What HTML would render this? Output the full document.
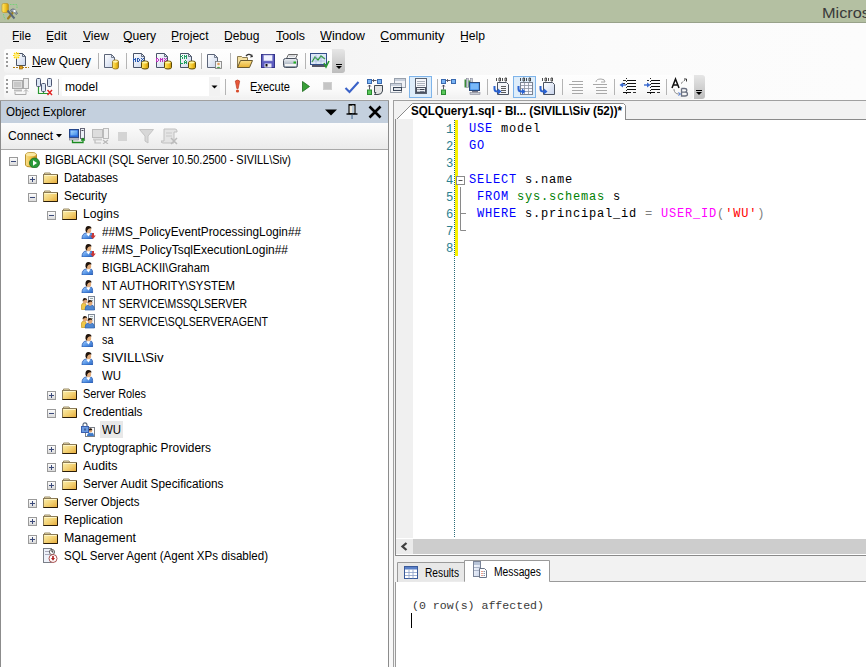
<!DOCTYPE html><html><head><meta charset="utf-8"><style>
*{margin:0;padding:0;box-sizing:border-box}
html,body{width:866px;height:667px;overflow:hidden;background:#f0f0f0;position:relative}
.r,.t,.i,.tb,.ovf,.gd,.sp,.sel{position:absolute}
.t{white-space:pre;line-height:1;transform-origin:0 0;font-family:"Liberation Sans",sans-serif}
.code{font-family:"Liberation Mono",monospace;font-size:12px;letter-spacing:0.8px;color:#000}
.tb{background:linear-gradient(#fefefe 0%,#fbfbfb 55%,#f1f1f1 100%);border-radius:3px}
.ovf{background:linear-gradient(#e6e6e6,#bdbdbd);border-radius:0 3px 3px 0}
.gd{width:2px;height:2px;background:#9a9a9a}
.sp{width:1px;background:#b4b4b4}
.sel{background:#deedfa;border:1px solid #7eb4ea}
</style></head><body><svg width="0" height="0" style="position:absolute"><defs><linearGradient id="gbox" x1="0" y1="0" x2="0" y2="1"><stop offset="0" stop-color="#fff"/><stop offset="1" stop-color="#d8d8d8"/></linearGradient><linearGradient id="gfold" x1="0" y1="0" x2="1" y2="1"><stop offset="0" stop-color="#fbf0b0"/><stop offset="0.55" stop-color="#f2cf70"/><stop offset="1" stop-color="#e4a838"/></linearGradient><linearGradient id="gdb" x1="0" y1="0" x2="1" y2="0"><stop offset="0" stop-color="#f8e090"/><stop offset="0.5" stop-color="#f0c040"/><stop offset="1" stop-color="#c89020"/></linearGradient><linearGradient id="gcyl" x1="0" y1="0" x2="1" y2="0"><stop offset="0" stop-color="#ffe870"/><stop offset="0.6" stop-color="#f0c020"/><stop offset="1" stop-color="#c09010"/></linearGradient><linearGradient id="gdoc" x1="0" y1="0" x2="1" y2="1"><stop offset="0" stop-color="#ffffff"/><stop offset="1" stop-color="#c8d4ec"/></linearGradient><linearGradient id="gprn" x1="0" y1="0" x2="0" y2="1"><stop offset="0" stop-color="#eef2f6"/><stop offset="1" stop-color="#8a98a8"/></linearGradient><linearGradient id="gusr" x1="0" y1="0" x2="1" y2="1"><stop offset="0" stop-color="#a8d0ff"/><stop offset="0.5" stop-color="#5a98e8"/><stop offset="1" stop-color="#2a64c0"/></linearGradient><linearGradient id="gopen" x1="0" y1="0" x2="0" y2="1"><stop offset="0" stop-color="#fbe08a"/><stop offset="1" stop-color="#e8b030"/></linearGradient><linearGradient id="gscr" x1="0" y1="0" x2="1" y2="1"><stop offset="0" stop-color="#a8d8ff"/><stop offset="1" stop-color="#3a88e8"/></linearGradient></defs></svg><div class="r" style="left:0;top:0;width:866px;height:22px;background:#b4c0a2"></div><div class="r" style="left:0;top:22px;width:866px;height:1px;background:#98a28a"></div><svg class="i" style="left:0px;top:0px;" width="22" height="22" viewBox="0 0 22 22"><rect x="2" y="3.5" width="6.5" height="9" rx="1.5" fill="url(#gcyl)" stroke="#b89020" stroke-width="0.6"/><rect x="10" y="4" width="1" height="1" fill="#7ad07a"/><rect x="11.5" y="4" width="1" height="1" fill="#7ad07a"/><rect x="13" y="4" width="1" height="1" fill="#7ad07a"/><rect x="14.5" y="4" width="1" height="1" fill="#7ad07a"/><rect x="16" y="4" width="1" height="1" fill="#7ad07a"/><rect x="16.5" y="5.5" width="1" height="1" fill="#7ad07a"/><rect x="16.5" y="7" width="1" height="1" fill="#7ad07a"/><rect x="3" y="14" width="1" height="1" fill="#7ad07a"/><rect x="3.3" y="15.5" width="1" height="1" fill="#7ad07a"/><rect x="3.8" y="17" width="1" height="1" fill="#7ad07a"/><rect x="4.5" y="18.5" width="1" height="1" fill="#7ad07a"/><path d="M8 18.5 L12.5 13" stroke="#a08020" stroke-width="2.2" stroke-linecap="round"/><path d="M7.5 10.5 L14.5 18.5" stroke="#5a6878" stroke-width="1.9"/><path d="M10.5 10 Q13 8 15 9.5 L17.5 13.5 L16 14.5 L13.5 11.5 L11.5 12 Z" fill="#9aa4b0" stroke="#4a5868" stroke-width="0.6"/><circle cx="14.5" cy="11" r="1.2" fill="#fff"/></svg><div class="t" style="left:822px;top:5.30px;font-size:15px;font-family:'Liberation Sans';font-weight:normal;color:#3a3a3a;transform:scaleX(1.0867);">Micros</div><div class="r" style="left:0;top:23px;width:866px;height:77px;background:linear-gradient(90deg,#eeeeee 0px,#f4f4f4 300px,#fbfbfb 600px,#fcfcfc 866px)"></div><div class="t" style="left:11.7px;top:29.84px;font-size:12px;font-family:'Liberation Sans';font-weight:normal;color:#000;transform:scaleX(0.9822);">File</div><div class="t" style="left:45.7px;top:29.84px;font-size:12px;font-family:'Liberation Sans';font-weight:normal;color:#000;transform:scaleX(1.0151);">Edit</div><div class="t" style="left:82.5px;top:29.84px;font-size:12px;font-family:'Liberation Sans';font-weight:normal;color:#000;transform:scaleX(1.0079);">View</div><div class="t" style="left:123px;top:29.84px;font-size:12px;font-family:'Liberation Sans';font-weight:normal;color:#000;transform:scaleX(1.0096);">Query</div><div class="t" style="left:171px;top:29.84px;font-size:12px;font-family:'Liberation Sans';font-weight:normal;color:#000;transform:scaleX(1.0038);">Project</div><div class="t" style="left:224px;top:29.84px;font-size:12px;font-family:'Liberation Sans';font-weight:normal;color:#000;transform:scaleX(1.0035);">Debug</div><div class="t" style="left:276px;top:29.84px;font-size:12px;font-family:'Liberation Sans';font-weight:normal;color:#000;transform:scaleX(1.0351);">Tools</div><div class="t" style="left:320px;top:29.84px;font-size:12px;font-family:'Liberation Sans';font-weight:normal;color:#000;transform:scaleX(1.0542);">Window</div><div class="t" style="left:380px;top:29.84px;font-size:12px;font-family:'Liberation Sans';font-weight:normal;color:#000;transform:scaleX(1.0628);">Community</div><div class="t" style="left:460px;top:29.84px;font-size:12px;font-family:'Liberation Sans';font-weight:normal;color:#000;transform:scaleX(1.0127);">Help</div><div class="r" style="left:13px;top:41px;width:6px;height:1px;background:#000"></div><div class="r" style="left:47px;top:41px;width:6px;height:1px;background:#000"></div><div class="r" style="left:83px;top:41px;width:7px;height:1px;background:#000"></div><div class="r" style="left:124px;top:41px;width:9px;height:1px;background:#000"></div><div class="r" style="left:172px;top:41px;width:7px;height:1px;background:#000"></div><div class="r" style="left:225px;top:41px;width:7px;height:1px;background:#000"></div><div class="r" style="left:276px;top:41px;width:7px;height:1px;background:#000"></div><div class="r" style="left:321px;top:41px;width:10px;height:1px;background:#000"></div><div class="r" style="left:381px;top:41px;width:8px;height:1px;background:#000"></div><div class="r" style="left:461px;top:41px;width:7px;height:1px;background:#000"></div><div class="tb" style="left:4px;top:49px;width:328px;height:24px"></div><div class="ovf" style="left:332px;top:49px;width:13px;height:24px"></div><div class="tb" style="left:4px;top:75px;width:689px;height:24px"></div><div class="ovf" style="left:694px;top:75px;width:11px;height:24px"></div><div class="gd" style="left:6px;top:53px"></div><div class="gd" style="left:6px;top:57px"></div><div class="gd" style="left:6px;top:61px"></div><div class="gd" style="left:6px;top:65px"></div><div class="gd" style="left:6px;top:79px"></div><div class="gd" style="left:6px;top:83px"></div><div class="gd" style="left:6px;top:87px"></div><div class="gd" style="left:6px;top:91px"></div><div class="sp" style="left:98px;top:53px;height:16px"></div><div class="sp" style="left:126px;top:53px;height:16px"></div><div class="sp" style="left:201px;top:53px;height:16px"></div><div class="sp" style="left:230px;top:53px;height:16px"></div><div class="sp" style="left:305px;top:53px;height:16px"></div><div class="sp" style="left:58px;top:79px;height:16px"></div><div class="sp" style="left:225px;top:79px;height:16px"></div><div class="sp" style="left:437px;top:79px;height:16px"></div><div class="sp" style="left:487px;top:79px;height:16px"></div><div class="sp" style="left:562px;top:79px;height:16px"></div><div class="sp" style="left:614px;top:79px;height:16px"></div><div class="sp" style="left:666px;top:79px;height:16px"></div><svg class="i" style="left:335px;top:64px;" width="8" height="6" viewBox="0 0 8 6"><rect x="1" y="0" width="6" height="1" fill="#000"/><path d="M1 2 L7 2 L4 5 Z" fill="#000"/></svg><svg class="i" style="left:695px;top:90px;" width="8" height="6" viewBox="0 0 8 6"><rect x="1" y="0" width="6" height="1" fill="#000"/><path d="M1 2 L7 2 L4 5 Z" fill="#000"/></svg><div class="t" style="left:32px;top:55.42px;font-size:12.5px;font-family:'Liberation Sans';font-weight:normal;color:#000;transform:scaleX(0.9435);">New Query</div><div class="r" style="left:32px;top:66px;width:9px;height:1px;background:#000"></div><svg class="i" style="left:12px;top:52px;" width="18" height="18" viewBox="0 0 18 18"><path d="M4.5 1.5 L10.5 1.5 L13.5 4.5 L13.5 13.5 L4.5 13.5 Z" fill="url(#gdoc)" stroke="#4a5468"/><path d="M10.5 1.5 L10.5 4.5 L13.5 4.5" fill="none" stroke="#4a5468" stroke-width="0.8"/><path d="M4.5 0 L4.5 7 M1 3.5 L8 3.5 M2 1 L7 6 M7 1 L2 6" stroke="#ffd000" stroke-width="1.2"/><circle cx="4.5" cy="3.5" r="2" fill="#fff080"/><path d="M1 15.5 L17 15.5" stroke="#b07a10" stroke-width="1.2" stroke-dasharray="2 1"/><rect x="7.5" y="14" width="3" height="3" fill="#e0a020" stroke="#906000" stroke-width="0.6"/><path d="M9 13.5 L9 14" stroke="#906000"/></svg><svg class="i" style="left:103px;top:53px;" width="18" height="17" viewBox="0 0 18 17"><path d="M1.5 1.5 L8.5 1.5 L11.5 4.5 L11.5 14.5 L1.5 14.5 Z" fill="url(#gdoc)" stroke="#5b6478" stroke-width="1"/><path d="M8.5 1.5 L8.5 4.5 L11.5 4.5" fill="none" stroke="#5b6478" stroke-width="0.8"/><path d="M9.5 8.5 Q9.5 7 12.5 7 Q15.5 7 15.5 8.5 L15.5 14.5 Q15.5 16 12.5 16 Q9.5 16 9.5 14.5 Z" fill="url(#gcyl)" stroke="#8a6a10" stroke-width="0.8"/><ellipse cx="12.5" cy="8.6" rx="2.5" ry="1.1" fill="#fff3b0"/></svg><svg class="i" style="left:132px;top:52px;" width="18" height="18" viewBox="0 0 18 18"><path d="M1.5 1.5 L9.5 1.5 L12.5 4.5 L12.5 15.5 L1.5 15.5 Z" fill="url(#gdoc)" stroke="#4a5468"/><path d="M9.5 1.5 L9.5 4.5 L12.5 4.5" fill="none" stroke="#4a5468" stroke-width="0.8"/><rect x="1" y="6" width="1" height="1" fill="#2a5ab0"/><rect x="3" y="6" width="1" height="1" fill="#2a5ab0"/><rect x="1" y="7" width="1" height="1" fill="#2a5ab0"/><rect x="2" y="7" width="1" height="1" fill="#2a5ab0"/><rect x="3" y="7" width="1" height="1" fill="#2a5ab0"/><rect x="1" y="8" width="1" height="1" fill="#2a5ab0"/><rect x="3" y="8" width="1" height="1" fill="#2a5ab0"/><rect x="1" y="9" width="1" height="1" fill="#2a5ab0"/><rect x="3" y="9" width="1" height="1" fill="#2a5ab0"/><rect x="5" y="6" width="1" height="1" fill="#2a5ab0"/><rect x="6" y="6" width="1" height="1" fill="#2a5ab0"/><rect x="5" y="7" width="1" height="1" fill="#2a5ab0"/><rect x="7" y="7" width="1" height="1" fill="#2a5ab0"/><rect x="5" y="8" width="1" height="1" fill="#2a5ab0"/><rect x="7" y="8" width="1" height="1" fill="#2a5ab0"/><rect x="5" y="9" width="1" height="1" fill="#2a5ab0"/><rect x="6" y="9" width="1" height="1" fill="#2a5ab0"/><rect x="9" y="6" width="1" height="1" fill="#2a5ab0"/><rect x="11" y="6" width="1" height="1" fill="#2a5ab0"/><rect x="10" y="7" width="1" height="1" fill="#2a5ab0"/><rect x="9" y="8" width="1" height="1" fill="#2a5ab0"/><rect x="11" y="8" width="1" height="1" fill="#2a5ab0"/><rect x="9" y="9" width="1" height="1" fill="#2a5ab0"/><rect x="11" y="9" width="1" height="1" fill="#2a5ab0"/><path d="M9.5 10.5 Q9.5 9 13 9 Q16.5 9 16.5 10.5 L16.5 15.5 Q16.5 17 13 17 Q9.5 17 9.5 15.5 Z" fill="url(#gcyl)" stroke="#5a4a08" stroke-width="1"/><ellipse cx="13" cy="10.5" rx="2.6" ry="1" fill="#fff8a0"/></svg><svg class="i" style="left:155px;top:52px;" width="18" height="18" viewBox="0 0 18 18"><path d="M1.5 1.5 L9.5 1.5 L12.5 4.5 L12.5 15.5 L1.5 15.5 Z" fill="url(#gdoc)" stroke="#4a5468"/><path d="M9.5 1.5 L9.5 4.5 L12.5 4.5" fill="none" stroke="#4a5468" stroke-width="0.8"/><rect x="1" y="6" width="1" height="1" fill="#c030c0"/><rect x="2" y="6" width="1" height="1" fill="#c030c0"/><rect x="1" y="7" width="1" height="1" fill="#c030c0"/><rect x="3" y="7" width="1" height="1" fill="#c030c0"/><rect x="1" y="8" width="1" height="1" fill="#c030c0"/><rect x="3" y="8" width="1" height="1" fill="#c030c0"/><rect x="1" y="9" width="1" height="1" fill="#c030c0"/><rect x="2" y="9" width="1" height="1" fill="#c030c0"/><rect x="5" y="6" width="1" height="1" fill="#c030c0"/><rect x="7" y="6" width="1" height="1" fill="#c030c0"/><rect x="5" y="7" width="1" height="1" fill="#c030c0"/><rect x="6" y="7" width="1" height="1" fill="#c030c0"/><rect x="7" y="7" width="1" height="1" fill="#c030c0"/><rect x="5" y="8" width="1" height="1" fill="#c030c0"/><rect x="7" y="8" width="1" height="1" fill="#c030c0"/><rect x="5" y="9" width="1" height="1" fill="#c030c0"/><rect x="7" y="9" width="1" height="1" fill="#c030c0"/><rect x="9" y="6" width="1" height="1" fill="#c030c0"/><rect x="11" y="6" width="1" height="1" fill="#c030c0"/><rect x="10" y="7" width="1" height="1" fill="#c030c0"/><rect x="9" y="8" width="1" height="1" fill="#c030c0"/><rect x="11" y="8" width="1" height="1" fill="#c030c0"/><rect x="9" y="9" width="1" height="1" fill="#c030c0"/><rect x="11" y="9" width="1" height="1" fill="#c030c0"/><path d="M9.5 10.5 Q9.5 9 13 9 Q16.5 9 16.5 10.5 L16.5 15.5 Q16.5 17 13 17 Q9.5 17 9.5 15.5 Z" fill="url(#gcyl)" stroke="#5a4a08" stroke-width="1"/><ellipse cx="13" cy="10.5" rx="2.6" ry="1" fill="#fff8a0"/></svg><svg class="i" style="left:179px;top:52px;" width="18" height="18" viewBox="0 0 18 18"><path d="M1.5 1.5 L9.5 1.5 L12.5 4.5 L12.5 15.5 L1.5 15.5 Z" fill="url(#gdoc)" stroke="#4a5468"/><path d="M9.5 1.5 L9.5 4.5 L12.5 4.5" fill="none" stroke="#4a5468" stroke-width="0.8"/><rect x="1" y="3" width="1" height="1" fill="#20a060"/><rect x="3" y="3" width="1" height="1" fill="#20a060"/><rect x="2" y="4" width="1" height="1" fill="#20a060"/><rect x="1" y="5" width="1" height="1" fill="#20a060"/><rect x="3" y="5" width="1" height="1" fill="#20a060"/><rect x="1" y="6" width="1" height="1" fill="#20a060"/><rect x="3" y="6" width="1" height="1" fill="#20a060"/><rect x="5" y="3" width="1" height="1" fill="#20a060"/><rect x="7" y="3" width="1" height="1" fill="#20a060"/><rect x="5" y="4" width="1" height="1" fill="#20a060"/><rect x="6" y="4" width="1" height="1" fill="#20a060"/><rect x="7" y="4" width="1" height="1" fill="#20a060"/><rect x="5" y="5" width="1" height="1" fill="#20a060"/><rect x="7" y="5" width="1" height="1" fill="#20a060"/><rect x="5" y="6" width="1" height="1" fill="#20a060"/><rect x="7" y="6" width="1" height="1" fill="#20a060"/><rect x="1" y="8" width="1" height="1" fill="#20a060"/><rect x="1" y="9" width="1" height="1" fill="#20a060"/><rect x="1" y="10" width="1" height="1" fill="#20a060"/><rect x="1" y="11" width="1" height="1" fill="#20a060"/><rect x="2" y="11" width="1" height="1" fill="#20a060"/><rect x="3" y="11" width="1" height="1" fill="#20a060"/><rect x="6" y="8" width="1" height="1" fill="#20a060"/><rect x="5" y="9" width="1" height="1" fill="#20a060"/><rect x="7" y="9" width="1" height="1" fill="#20a060"/><rect x="5" y="10" width="1" height="1" fill="#20a060"/><rect x="6" y="10" width="1" height="1" fill="#20a060"/><rect x="7" y="10" width="1" height="1" fill="#20a060"/><rect x="5" y="11" width="1" height="1" fill="#20a060"/><rect x="7" y="11" width="1" height="1" fill="#20a060"/><path d="M9.5 10.5 Q9.5 9 13 9 Q16.5 9 16.5 10.5 L16.5 15.5 Q16.5 17 13 17 Q9.5 17 9.5 15.5 Z" fill="url(#gcyl)" stroke="#5a4a08" stroke-width="1"/><ellipse cx="13" cy="10.5" rx="2.6" ry="1" fill="#fff8a0"/></svg><svg class="i" style="left:206px;top:53px;" width="18" height="17" viewBox="0 0 18 17"><path d="M1.5 1.5 L8.5 1.5 L11.5 4.5 L11.5 14.5 L1.5 14.5 Z" fill="url(#gdoc)" stroke="#5b6478" stroke-width="1"/><path d="M8.5 1.5 L8.5 4.5 L11.5 4.5" fill="none" stroke="#5b6478" stroke-width="0.8"/><rect x="9.5" y="8.5" width="6" height="7" fill="#f4f4f4" stroke="#777" stroke-width="0.8"/><circle cx="12.5" cy="11" r="1.3" fill="#e0a060"/><path d="M10.5 15 Q12.5 12.5 14.5 15" fill="#50a050"/></svg><svg class="i" style="left:236px;top:53px;" width="18" height="16" viewBox="0 0 18 16"><path d="M1.5 14.5 L1.5 3.5 L5.5 3.5 L6.5 4.5 L11.5 4.5 L11.5 7" fill="#f4e0a0" stroke="#8a7a50" stroke-width="1"/><path d="M1.5 14.5 L4.5 7.5 L16.5 7.5 L13.5 14.5 Z" fill="url(#gopen)" stroke="#6a5a30" stroke-width="1"/><path d="M10 3 Q12.5 0 15.5 2.5" fill="none" stroke="#333" stroke-width="1.3"/><path d="M14 4.5 L17 4 L16 1 Z" fill="#333"/></svg><svg class="i" style="left:260px;top:53px;" width="16" height="16" viewBox="0 0 16 16"><rect x="1.5" y="1.5" width="13" height="13" fill="#5c5cc0" stroke="#34348a"/><rect x="3.5" y="2" width="9" height="6" fill="#f0f2ff" stroke="#8888c8" stroke-width="0.6"/><rect x="4.5" y="10.5" width="7" height="4" fill="#e8e8f4"/><rect x="5.5" y="11" width="2" height="2.5" fill="#111"/></svg><svg class="i" style="left:282px;top:53px;" width="17" height="16" viewBox="0 0 17 16"><path d="M4.5 5.5 L6.5 1.5 L15.5 1.5 L13.5 5.5 Z" fill="#f4f6f8" stroke="#555" stroke-width="0.9"/><path d="M7 3 L13 3" stroke="#999" stroke-width="0.6"/><rect x="1.5" y="5.5" width="14" height="9" rx="2" fill="url(#gprn)" stroke="#4a5260"/><rect x="3" y="11" width="11" height="2" fill="#f4f4f4"/><rect x="11.5" y="8.5" width="2.5" height="2" fill="#20b020"/></svg><svg class="i" style="left:310px;top:52px;" width="20" height="18" viewBox="0 0 20 18"><rect x="0.5" y="1.5" width="16" height="11" fill="#dde8f8" stroke="#34508a"/><path d="M2 10 L5 5 L8 8 L11 4 L15 7" fill="none" stroke="#2a9a30" stroke-width="1.3"/><path d="M2 6 L15 6 M2 9 L15 9 M6 3 L6 12 M11 3 L11 12" stroke="#90a8d0" stroke-width="0.5"/><rect x="2" y="13" width="14" height="2" fill="#556"/><path d="M14 11 L16 15 L19 9" fill="none" stroke="#2a9a30" stroke-width="1.6"/></svg><svg class="i" style="left:12px;top:78px;" width="18" height="18" viewBox="0 0 18 18"><rect x="0.5" y="2.5" width="10" height="8" fill="#ddd" stroke="#aaa"/><rect x="2" y="4" width="7" height="5" fill="#c8c8c8"/><rect x="2" y="11.5" width="8" height="2" fill="#bbb"/><rect x="11.5" y="0.5" width="5" height="10" fill="#eee" stroke="#aaa"/><path d="M3 14 L3 16.5 L14 16.5 L14 12 M12 13.5 L14 11.5 L16 13.5" fill="none" stroke="#aaa" stroke-width="1"/></svg><svg class="i" style="left:35px;top:77px;" width="19" height="19" viewBox="0 0 19 19"><rect x="1.5" y="1.5" width="4" height="8" rx="1" fill="#dce6f4" stroke="#4a5470"/><rect x="6.5" y="6.5" width="4" height="8" rx="1" fill="#dce6f4" stroke="#4a5470"/><rect x="12.5" y="1.5" width="4" height="8" rx="1" fill="#dce6f4" stroke="#4a5470"/><path d="M3.5 10 L3.5 16.5 L13 16.5 M8.5 15 L8.5 16.5" fill="none" stroke="#2a9a30" stroke-width="1.2"/><path d="M12.5 13 L17 18 M17 13 L12.5 18" stroke="#e02020" stroke-width="1.4"/></svg><svg class="i" style="left:233px;top:79px;" width="9" height="15" viewBox="0 0 9 15"><path d="M2.3 2 Q4.5 0 6.7 2 L5.2 9.5 L3.8 9.5 Z" fill="#e8583a" stroke="#b03018" stroke-width="0.6"/><circle cx="4.5" cy="12" r="1.6" fill="#d84a2a"/></svg><svg class="i" style="left:301px;top:80px;" width="10" height="13" viewBox="0 0 10 13"><path d="M1.5 1.5 L8.5 6.5 L1.5 11.5 Z" fill="#38a038" stroke="#1a6a1a" stroke-width="0.8"/></svg><svg class="i" style="left:323px;top:82px;" width="10" height="10" viewBox="0 0 10 10"><rect x="0" y="0" width="9" height="8" fill="#cfcfcf"/><rect x="1" y="1" width="7" height="6" fill="#c4c4c4"/></svg><svg class="i" style="left:344px;top:80px;" width="16" height="14" viewBox="0 0 16 14"><path d="M1.5 8 L5.5 12 L14.5 2" fill="none" stroke="#3a62c8" stroke-width="2.1"/></svg><svg class="i" style="left:366px;top:78px;" width="18" height="18" viewBox="0 0 18 18"><rect x="1.5" y="1.5" width="4" height="4" fill="#7ab4f4" stroke="#3a6ab0"/><rect x="11.5" y="1.5" width="4" height="4" fill="#7ab4f4" stroke="#3a6ab0"/><path d="M6.5 2.5 L10.5 2.5 M6.5 2.5 L8 1.2 M6.5 2.5 L8 3.8" stroke="#445" stroke-width="0.9" fill="none"/><rect x="1.5" y="12" width="4" height="4.5" fill="#5ac85a" stroke="#2a8a30"/><path d="M3.5 11.5 L3.5 7 M3.5 7 L2.2 8.5 M3.5 7 L4.8 8.5" stroke="#445" stroke-width="0.9" fill="none"/><path d="M8.5 7.5 L16.5 7.5 L16.5 13 Q16 16.5 12 16.5 L8.5 16.5 L10 14.5 L8.5 14.5 Z" fill="#e4e4e4" stroke="#404850" stroke-width="1"/></svg><svg class="i" style="left:390px;top:78px;" width="16" height="16" viewBox="0 0 16 16"><rect x="4.5" y="0.5" width="11" height="9" fill="#f0f2f6" stroke="#98a0ac"/><rect x="5" y="1" width="10" height="2" fill="#c8d0dc"/><rect x="0.5" y="5.5" width="11" height="9" fill="#f4f6f8" stroke="#98a0ac"/><rect x="1" y="6" width="10" height="2" fill="#c8d0dc"/><rect x="3.5" y="9.5" width="8" height="3" fill="#dfe4ea" stroke="#3a4658"/></svg><div class="sel" style="left:409px;top:76px;width:23px;height:22px"></div><svg class="i" style="left:413px;top:78px;" width="16" height="17" viewBox="0 0 16 17"><rect x="2.5" y="0.5" width="11" height="15" fill="#f6f7fa" stroke="#5a6270"/><path d="M4 3.5 L12 3.5 M4 5.5 L12 5.5 M4 7.5 L12 7.5" stroke="#9aa2ae" stroke-width="0.8"/><rect x="3.5" y="9.5" width="9" height="5" fill="#eef1f5" stroke="#4a5260"/><rect x="4.5" y="11" width="1" height="1" fill="#3a4250"/><rect x="6.5" y="11" width="5" height="1" fill="#3a4250"/><rect x="4.5" y="13" width="1" height="1" fill="#7a8290"/><rect x="6.5" y="13" width="5" height="1" fill="#7a8290"/></svg><svg class="i" style="left:440px;top:78px;" width="18" height="18" viewBox="0 0 18 18"><rect x="1.5" y="1.5" width="4" height="4" fill="#7ab4f4" stroke="#3a6ab0"/><rect x="11.5" y="1.5" width="4" height="4" fill="#7ab4f4" stroke="#3a6ab0"/><path d="M6.5 2.5 L10.5 2.5 M6.5 2.5 L8 1.2 M6.5 2.5 L8 3.8" stroke="#445" stroke-width="0.9" fill="none"/><rect x="1.5" y="12" width="4" height="4.5" fill="#5ac85a" stroke="#2a8a30"/><path d="M3.5 11.5 L3.5 7 M3.5 7 L2.2 8.5 M3.5 7 L4.8 8.5" stroke="#445" stroke-width="0.9" fill="none"/></svg><svg class="i" style="left:464px;top:78px;" width="17" height="18" viewBox="0 0 17 18"><rect x="0.5" y="1.5" width="2" height="8" fill="#3a8a3a"/><rect x="2.5" y="0.5" width="2" height="9" fill="#c8d0d8" stroke="#778" stroke-width="0.5"/><rect x="4.5" y="2.5" width="2" height="7" fill="#4a9a4a"/><rect x="6.5" y="0.5" width="2" height="8" fill="#c8d0d8" stroke="#778" stroke-width="0.5"/><rect x="5.5" y="4.5" width="10" height="8" fill="#3a88e8" stroke="#2a4a7a"/><rect x="6.5" y="5.5" width="8" height="6" fill="#78b8f8"/><rect x="8" y="13" width="6" height="1.5" fill="#778"/><rect x="6" y="14.5" width="10" height="2" fill="#c8ccd4" stroke="#778" stroke-width="0.5"/></svg><svg class="i" style="left:492px;top:77px;" width="18" height="19" viewBox="0 0 18 19"><path d="M4.5 1 L4.5 4 M7 1 L8.5 1 L8.5 4 L7 4 Z M10.5 1 L10.5 4 M13 1 L14.5 1 L14.5 4 L13 4 Z" stroke="#222" stroke-width="0.8" fill="none"/><path d="M5.5 5.5 L14.5 5.5 L16.5 7.5 L16.5 17.5 L5.5 17.5 Z" fill="#f4f6fa" stroke="#4a5260"/><path d="M9 9.5 L14 9.5 M9 11.5 L14 11.5 M9 13.5 L14 13.5 M9 15.5 L14 15.5" stroke="#333" stroke-width="0.8"/><path d="M2.5 9 L2.5 12 Q2.5 14.5 5.5 14.5 L6.5 14.5" fill="none" stroke="#2a62d0" stroke-width="2"/><path d="M6 11.5 L9.5 14.5 L6 17.5 Z" fill="#2a62d0"/></svg><div class="sel" style="left:513px;top:76px;width:23px;height:22px"></div><svg class="i" style="left:516px;top:77px;" width="18" height="19" viewBox="0 0 18 19"><path d="M4.5 1 L4.5 4 M7 1 L8.5 1 L8.5 4 L7 4 Z M10.5 1 L10.5 4 M13 1 L14.5 1 L14.5 4 L13 4 Z" stroke="#222" stroke-width="0.8" fill="none"/><rect x="4.5" y="5.5" width="12" height="12" fill="#f8f8ff" stroke="#7a8290"/><path d="M5 8.5 L16 8.5 M5 11.5 L16 11.5 M5 14.5 L16 14.5 M8.5 6 L8.5 17 M12.5 6 L12.5 17" stroke="#8a92a0" stroke-width="0.8"/><path d="M2.5 9 L2.5 12 Q2.5 14.5 5.5 14.5 L6.5 14.5" fill="none" stroke="#2a62d0" stroke-width="2"/><path d="M6 11.5 L9.5 14.5 L6 17.5 Z" fill="#2a62d0"/></svg><svg class="i" style="left:538px;top:77px;" width="18" height="19" viewBox="0 0 18 19"><path d="M4.5 1 L4.5 4 M7 1 L8.5 1 L8.5 4 L7 4 Z M10.5 1 L10.5 4 M13 1 L14.5 1 L14.5 4 L13 4 Z" stroke="#222" stroke-width="0.8" fill="none"/><path d="M5.5 5.5 L14.5 5.5 L16.5 7.5 L16.5 17.5 L5.5 17.5 Z" fill="url(#gdoc)" stroke="#4a5260"/><path d="M2.5 9 L2.5 12 Q2.5 14.5 5.5 14.5 L6.5 14.5" fill="none" stroke="#2a62d0" stroke-width="2"/><path d="M6 11.5 L9.5 14.5 L6 17.5 Z" fill="#2a62d0"/></svg><svg class="i" style="left:568px;top:79px;" width="16" height="16" viewBox="0 0 16 16"><path d="M4 2.5 L15 2.5 M1 5.5 L15 5.5 M4 8.5 L15 8.5 M4 11.5 L15 11.5 M4 14.5 L15 14.5" stroke="#a8a8a8" stroke-width="1"/></svg><svg class="i" style="left:592px;top:78px;" width="16" height="17" viewBox="0 0 16 17"><path d="M4 4 Q4 1 9 1 Q13 1 13 4 L9 4" fill="none" stroke="#a8a8a8"/><path d="M1 6.5 L15 6.5 M4 9.5 L15 9.5 M4 12.5 L15 12.5 M4 15.5 L15 15.5" stroke="#a8a8a8" stroke-width="1"/></svg><svg class="i" style="left:619px;top:78px;" width="19" height="18" viewBox="0 0 19 18"><path d="M8 2.5 L17 2.5 M8 5.5 L17 5.5 M8 8.5 L17 8.5 M8 11.5 L17 11.5 M4 14.5 L12 14.5" stroke="#111" stroke-width="1"/><path d="M4 2.5 L7 2.5 M4 5.5 L6 5.5 M14 14.5 L17 14.5" stroke="#333" stroke-width="1"/><path d="M7.5 0 L7.5 17" stroke="#222" stroke-width="1" stroke-dasharray="1 2"/><path d="M0.5 7 L4 4.5 L4 9.5 Z" fill="#3a6ad0"/><path d="M3 7 L7 7" stroke="#3a6ad0" stroke-width="1.4"/></svg><svg class="i" style="left:643px;top:78px;" width="19" height="18" viewBox="0 0 19 18"><path d="M8 2.5 L17 2.5 M8 5.5 L17 5.5 M8 8.5 L17 8.5 M8 11.5 L17 11.5 M4 14.5 L12 14.5" stroke="#111" stroke-width="1"/><path d="M4 2.5 L6 2.5 M14 14.5 L17 14.5" stroke="#333" stroke-width="1"/><path d="M7.5 0 L7.5 17" stroke="#222" stroke-width="1" stroke-dasharray="1 2"/><path d="M7.5 7 L4 4.5 L4 9.5 Z" fill="#3a6ad0"/><path d="M1 7 L5 7" stroke="#3a6ad0" stroke-width="1.4"/></svg><svg class="i" style="left:671px;top:77px;" width="19" height="20" viewBox="0 0 19 20"><path d="M1 11 L4.5 2 L8 11 M2.3 8 L6.7 8" fill="none" stroke="#111" stroke-width="1.5"/><path d="M10.5 11.5 L10.5 19 L14 19 Q16.5 19 16.5 17 Q16.5 15.2 14 15.2 L10.5 15.2 M10.5 11.5 L13.5 11.5 Q15.8 11.5 15.8 13.3 Q15.8 15.2 13.5 15.2" fill="none" stroke="#6a7080" stroke-width="1.3"/><path d="M10 6.5 L14.5 2.5" stroke="#333" stroke-width="1" stroke-dasharray="1 1"/><path d="M13 2 L15.5 2 L15.5 4.5" fill="none" stroke="#333" stroke-width="1"/><path d="M3 12.5 Q3.5 17 8 17" fill="none" stroke="#333" stroke-width="1" stroke-dasharray="1 1"/><path d="M7.5 15.5 L9.5 17 L7.5 18.5" fill="none" stroke="#3a6ad0" stroke-width="1"/></svg><div class="r" style="left:62px;top:77px;width:147px;height:19px;background:#fff"></div><div class="r" style="left:209px;top:77px;width:11px;height:19px;background:#f2f2f2"></div><div class="t" style="left:65px;top:81.42px;font-size:12.5px;font-family:'Liberation Sans';font-weight:normal;color:#000;transform:scaleX(0.9693);">model</div><svg class="i" style="left:211px;top:85px;" width="8" height="5" viewBox="0 0 8 5"><path d="M0.5 0.5 L6.5 0.5 L3.5 3.5 Z" fill="#000"/></svg><div class="t" style="left:250px;top:81.42px;font-size:12.5px;font-family:'Liberation Sans';font-weight:normal;color:#000;transform:scaleX(0.8855);">Execute</div><div class="r" style="left:256px;top:92px;width:5px;height:1px;background:#000"></div><div class="r" style="left:0;top:100px;width:389px;height:567px;background:#fff"></div><div class="r" style="left:0;top:100px;width:1px;height:567px;background:#8c8c8c"></div><div class="r" style="left:388px;top:100px;width:1px;height:567px;background:#8c8c8c"></div><div class="r" style="left:389px;top:100px;width:4px;height:567px;background:#f8f8f8"></div><div class="r" style="left:1px;top:100px;width:387px;height:23px;background:#c4d0de"></div><div class="t" style="left:6px;top:106.42px;font-size:12.5px;font-family:'Liberation Sans';font-weight:normal;color:#000;transform:scaleX(0.9285);">Object Explorer</div><div class="r" style="left:0;top:100px;width:389px;height:1px;background:#a0a0a0"></div><svg class="i" style="left:325px;top:109px;" width="12" height="7" viewBox="0 0 12 7"><path d="M0 0.5 L12 0.5 L6 6.5 Z" fill="#000"/></svg><svg class="i" style="left:346px;top:103px;" width="12" height="17" viewBox="0 0 12 17"><rect x="3" y="1.6" width="6" height="9" fill="#e8e4d8" stroke="#000" stroke-width="1.1"/><rect x="3" y="1" width="6" height="1.6" fill="#000"/><rect x="6" y="2.5" width="2" height="8" fill="#b8c8d8"/><rect x="0.5" y="10.3" width="11" height="1.4" fill="#000"/><rect x="5.4" y="11.7" width="1.3" height="4.3" fill="#5a7a9a"/></svg><svg class="i" style="left:368px;top:105px;" width="14" height="14" viewBox="0 0 14 14"><path d="M1.5 1.5 L12.5 12.5 M12.5 1.5 L1.5 12.5" stroke="#000" stroke-width="2.6"/></svg><div class="r" style="left:1px;top:123px;width:387px;height:26px;background:linear-gradient(#fcfcfc,#ebebeb)"></div><div class="r" style="left:1px;top:149px;width:387px;height:1px;background:#a8a8a8"></div><div class="t" style="left:8px;top:130.42px;font-size:12.5px;font-family:'Liberation Sans';font-weight:normal;color:#000;transform:scaleX(0.9664);">Connect</div><svg class="i" style="left:56px;top:134px;" width="6" height="4" viewBox="0 0 6 4"><path d="M0 0 L6 0 L3 3.5 Z" fill="#000"/></svg><svg class="i" style="left:69px;top:128px;" width="17" height="16" viewBox="0 0 17 16"><rect x="0.5" y="1.5" width="9" height="8" fill="#2a68d8" stroke="#24468a"/><rect x="1.5" y="2.5" width="7" height="5" fill="url(#gscr)"/><rect x="0.5" y="10" width="9" height="2" fill="#c8d0dc" stroke="#667" stroke-width="0.5"/><rect x="11.5" y="0.5" width="4" height="10" fill="#eef2f8" stroke="#667"/><rect x="12.5" y="2" width="2" height="1" fill="#445"/><path d="M3.5 12 L3.5 14.5 L14 14.5 L14 11 M12.2 12.5 L14 10.5 L15.8 12.5" fill="none" stroke="#1a8a20" stroke-width="1.3"/></svg><svg class="i" style="left:92px;top:128px;" width="17" height="16" viewBox="0 0 17 16"><rect x="0.5" y="1.5" width="10" height="8" fill="#ddd" stroke="#bbb"/><rect x="1" y="10.5" width="9" height="2" fill="#ccc"/><rect x="11.5" y="0.5" width="5" height="10" fill="#f0f0f0" stroke="#bbb"/><path d="M3 12 L3 15 L9 15 M11 12 L16 16 M16 12 L11 16" fill="none" stroke="#bbb" stroke-width="1.2"/></svg><svg class="i" style="left:118px;top:132px;" width="9" height="9" viewBox="0 0 9 9"><rect x="0" y="0" width="9" height="9" fill="#d4d4d4"/></svg><svg class="i" style="left:139px;top:129px;" width="15" height="15" viewBox="0 0 15 15"><path d="M0.5 0.5 L14.5 0.5 L9 7 L9 14 L6 12 L6 7 Z" fill="#d8d8d8" stroke="#c4c4c4"/></svg><svg class="i" style="left:161px;top:128px;" width="17" height="17" viewBox="0 0 17 17"><path d="M3 1 L14 1 Q16 1 16 3 L16 4 L13 4 L13 15 L2 15 Q0 15 0 13 L3 13 Z" fill="#e4e4e4" stroke="#c0c0c0"/><path d="M5 5 L11 5 M5 8 L11 8" stroke="#c8c8c8"/><path d="M10 10 L16 16 M16 10 L10 16" stroke="#bbb" stroke-width="1.5"/></svg><svg class="i" style="left:9px;top:157px;" width="9" height="9" viewBox="0 0 9 9"><rect x="0.5" y="0.5" width="8" height="8" fill="url(#gbox)" stroke="#9a9a9a"/><rect x="2" y="4" width="5" height="1" fill="#3b4a7a"/></svg><svg class="i" style="left:25px;top:152px;" width="15" height="16" viewBox="0 0 15 16"><path d="M0.5 2.5 Q0.5 0.5 6 0.5 Q11.5 0.5 11.5 2.5 L11.5 13 Q11.5 15 6 15 Q0.5 15 0.5 13 Z" fill="url(#gdb)" stroke="#b08820" stroke-width="0.9"/><ellipse cx="6" cy="2.5" rx="5.2" ry="1.8" fill="#fbe8a0"/><circle cx="9.5" cy="11" r="5" fill="#2a9a3a" stroke="#1a6a20" stroke-width="0.8"/><path d="M8 8.3 L12 11 L8 13.7 Z" fill="#fff"/></svg><div class="t" style="left:45px;top:153.84px;font-size:12px;font-family:'Liberation Sans';font-weight:normal;color:#000;transform:scaleX(0.9099);">BIGBLACKII (SQL Server 10.50.2500 - SIVILL\Siv)</div><svg class="i" style="left:28px;top:175px;" width="9" height="9" viewBox="0 0 9 9"><rect x="0.5" y="0.5" width="8" height="8" fill="url(#gbox)" stroke="#9a9a9a"/><rect x="2" y="4" width="5" height="1" fill="#3b4a7a"/><rect x="4" y="2" width="1" height="5" fill="#3b4a7a"/></svg><svg class="i" style="left:43px;top:172px;" width="15" height="12" viewBox="0 0 15 12"><path d="M1.5 2.5 L1.5 1 L7 1 L8 2.5" fill="#f4e8b8" stroke="#9a8c68" stroke-width="1"/><rect x="0.5" y="2.5" width="14" height="9" fill="url(#gfold)" stroke="#8c7c58"/><path d="M14.5 3 L14.5 11.5 L0.5 11.5" fill="none" stroke="#2a1c08" stroke-width="1"/><path d="M1.5 3.5 L13.5 3.5" stroke="#fff6c8" stroke-width="1"/></svg><div class="t" style="left:64px;top:171.84px;font-size:12px;font-family:'Liberation Sans';font-weight:normal;color:#000;transform:scaleX(0.9412);">Databases</div><svg class="i" style="left:28px;top:193px;" width="9" height="9" viewBox="0 0 9 9"><rect x="0.5" y="0.5" width="8" height="8" fill="url(#gbox)" stroke="#9a9a9a"/><rect x="2" y="4" width="5" height="1" fill="#3b4a7a"/></svg><svg class="i" style="left:43px;top:190px;" width="15" height="12" viewBox="0 0 15 12"><path d="M1.5 2.5 L1.5 1 L7 1 L8 2.5" fill="#f4e8b8" stroke="#9a8c68" stroke-width="1"/><rect x="0.5" y="2.5" width="14" height="9" fill="url(#gfold)" stroke="#8c7c58"/><path d="M14.5 3 L14.5 11.5 L0.5 11.5" fill="none" stroke="#2a1c08" stroke-width="1"/><path d="M1.5 3.5 L13.5 3.5" stroke="#fff6c8" stroke-width="1"/></svg><div class="t" style="left:64px;top:189.84px;font-size:12px;font-family:'Liberation Sans';font-weight:normal;color:#000;transform:scaleX(0.9917);">Security</div><svg class="i" style="left:47px;top:211px;" width="9" height="9" viewBox="0 0 9 9"><rect x="0.5" y="0.5" width="8" height="8" fill="url(#gbox)" stroke="#9a9a9a"/><rect x="2" y="4" width="5" height="1" fill="#3b4a7a"/></svg><svg class="i" style="left:62px;top:208px;" width="15" height="12" viewBox="0 0 15 12"><path d="M1.5 2.5 L1.5 1 L7 1 L8 2.5" fill="#f4e8b8" stroke="#9a8c68" stroke-width="1"/><rect x="0.5" y="2.5" width="14" height="9" fill="url(#gfold)" stroke="#8c7c58"/><path d="M14.5 3 L14.5 11.5 L0.5 11.5" fill="none" stroke="#2a1c08" stroke-width="1"/><path d="M1.5 3.5 L13.5 3.5" stroke="#fff6c8" stroke-width="1"/></svg><div class="t" style="left:83px;top:207.84px;font-size:12px;font-family:'Liberation Sans';font-weight:normal;color:#000;transform:scaleX(1.0177);">Logins</div><svg class="i" style="left:81px;top:225px;" width="15" height="14" viewBox="0 0 15 14"><path d="M1 14 Q1 8.5 5 8 L7.5 10 L10 8 Q12 8.5 11.5 14 Z" fill="url(#gusr)" stroke="#2a5ab0" stroke-width="0.8"/><path d="M5 8.5 L7.5 11.5 L9.5 8.5 Z" fill="#fff"/><ellipse cx="7.6" cy="5" rx="2.6" ry="3.2" fill="#e2ac7c"/><path d="M4.5 6 Q4 1 7.5 1 Q10.5 1 10.5 3.5 L9 3.2 Q7 3.5 6.2 5.5 L6 8 Z" fill="#20140c"/><path d="M11 8 L13 8 L13 10.5 L14.8 10.5 L12 14 L9.2 10.5 L11 10.5 Z" fill="#c83838"/></svg><div class="t" style="left:102px;top:225.84px;font-size:12px;font-family:'Liberation Sans';font-weight:normal;color:#000;transform:scaleX(0.9813);">##MS_PolicyEventProcessingLogin##</div><svg class="i" style="left:81px;top:243px;" width="15" height="14" viewBox="0 0 15 14"><path d="M1 14 Q1 8.5 5 8 L7.5 10 L10 8 Q12 8.5 11.5 14 Z" fill="url(#gusr)" stroke="#2a5ab0" stroke-width="0.8"/><path d="M5 8.5 L7.5 11.5 L9.5 8.5 Z" fill="#fff"/><ellipse cx="7.6" cy="5" rx="2.6" ry="3.2" fill="#e2ac7c"/><path d="M4.5 6 Q4 1 7.5 1 Q10.5 1 10.5 3.5 L9 3.2 Q7 3.5 6.2 5.5 L6 8 Z" fill="#20140c"/><path d="M11 8 L13 8 L13 10.5 L14.8 10.5 L12 14 L9.2 10.5 L11 10.5 Z" fill="#c83838"/></svg><div class="t" style="left:102px;top:243.84px;font-size:12px;font-family:'Liberation Sans';font-weight:normal;color:#000;transform:scaleX(0.9958);">##MS_PolicyTsqlExecutionLogin##</div><svg class="i" style="left:81px;top:261px;" width="15" height="14" viewBox="0 0 15 14"><path d="M1 14 Q1 8.5 5 8 L7.5 10 L10 8 Q12 8.5 11.5 14 Z" fill="url(#gusr)" stroke="#2a5ab0" stroke-width="0.8"/><path d="M5 8.5 L7.5 11.5 L9.5 8.5 Z" fill="#fff"/><ellipse cx="7.6" cy="5" rx="2.6" ry="3.2" fill="#e2ac7c"/><path d="M4.5 6 Q4 1 7.5 1 Q10.5 1 10.5 3.5 L9 3.2 Q7 3.5 6.2 5.5 L6 8 Z" fill="#20140c"/></svg><div class="t" style="left:102px;top:261.84px;font-size:12px;font-family:'Liberation Sans';font-weight:normal;color:#000;transform:scaleX(0.9482);">BIGBLACKII\Graham</div><svg class="i" style="left:81px;top:279px;" width="15" height="14" viewBox="0 0 15 14"><path d="M1 14 Q1 8.5 5 8 L7.5 10 L10 8 Q12 8.5 11.5 14 Z" fill="url(#gusr)" stroke="#2a5ab0" stroke-width="0.8"/><path d="M5 8.5 L7.5 11.5 L9.5 8.5 Z" fill="#fff"/><ellipse cx="7.6" cy="5" rx="2.6" ry="3.2" fill="#e2ac7c"/><path d="M4.5 6 Q4 1 7.5 1 Q10.5 1 10.5 3.5 L9 3.2 Q7 3.5 6.2 5.5 L6 8 Z" fill="#20140c"/></svg><div class="t" style="left:102px;top:279.84px;font-size:12px;font-family:'Liberation Sans';font-weight:normal;color:#000;transform:scaleX(0.9468);">NT AUTHORITY\SYSTEM</div><svg class="i" style="left:81px;top:296px;" width="15" height="15" viewBox="0 0 15 15"><rect x="7.5" y="0.5" width="6" height="13" fill="#f4f6fa" stroke="#7d8796"/><rect x="9" y="2" width="3" height="1" fill="#9aa"/><rect x="9" y="4" width="3" height="1" fill="#9aa"/><path d="M0.5 13.5 L0.5 9 Q1 7 3 7 L5 8 L5 13.5 Z" fill="#f0c84a" stroke="#c89a20" stroke-width="0.7"/><ellipse cx="4" cy="5" rx="2.3" ry="2.6" fill="#e0a878"/><path d="M1.7 5 Q1.7 1.8 4 2 Q6.3 2 6.3 4.5 L5 3.5 Z" fill="#2a1a10"/><path d="M4 14 Q4 9.5 7 9 L9 10 L11 9 Q13.5 9.5 13.5 14 Z" fill="#4e86d0" stroke="#2e62b0" stroke-width="0.7"/><ellipse cx="9" cy="7" rx="2.4" ry="2.7" fill="#e0a878"/><path d="M6.6 7 Q6.6 3.8 9 4 Q11.4 4 11.4 6.5 L10 5.5 Z" fill="#2a1a10"/></svg><div class="t" style="left:102px;top:297.84px;font-size:12px;font-family:'Liberation Sans';font-weight:normal;color:#000;transform:scaleX(0.8732);">NT SERVICE\MSSQLSERVER</div><svg class="i" style="left:81px;top:314px;" width="15" height="15" viewBox="0 0 15 15"><rect x="7.5" y="0.5" width="6" height="13" fill="#f4f6fa" stroke="#7d8796"/><rect x="9" y="2" width="3" height="1" fill="#9aa"/><rect x="9" y="4" width="3" height="1" fill="#9aa"/><path d="M0.5 13.5 L0.5 9 Q1 7 3 7 L5 8 L5 13.5 Z" fill="#f0c84a" stroke="#c89a20" stroke-width="0.7"/><ellipse cx="4" cy="5" rx="2.3" ry="2.6" fill="#e0a878"/><path d="M1.7 5 Q1.7 1.8 4 2 Q6.3 2 6.3 4.5 L5 3.5 Z" fill="#2a1a10"/><path d="M4 14 Q4 9.5 7 9 L9 10 L11 9 Q13.5 9.5 13.5 14 Z" fill="#4e86d0" stroke="#2e62b0" stroke-width="0.7"/><ellipse cx="9" cy="7" rx="2.4" ry="2.7" fill="#e0a878"/><path d="M6.6 7 Q6.6 3.8 9 4 Q11.4 4 11.4 6.5 L10 5.5 Z" fill="#2a1a10"/></svg><div class="t" style="left:102px;top:315.84px;font-size:12px;font-family:'Liberation Sans';font-weight:normal;color:#000;transform:scaleX(0.8764);">NT SERVICE\SQLSERVERAGENT</div><svg class="i" style="left:81px;top:333px;" width="15" height="14" viewBox="0 0 15 14"><path d="M1 14 Q1 8.5 5 8 L7.5 10 L10 8 Q12 8.5 11.5 14 Z" fill="url(#gusr)" stroke="#2a5ab0" stroke-width="0.8"/><path d="M5 8.5 L7.5 11.5 L9.5 8.5 Z" fill="#fff"/><ellipse cx="7.6" cy="5" rx="2.6" ry="3.2" fill="#e2ac7c"/><path d="M4.5 6 Q4 1 7.5 1 Q10.5 1 10.5 3.5 L9 3.2 Q7 3.5 6.2 5.5 L6 8 Z" fill="#20140c"/></svg><div class="t" style="left:102px;top:333.84px;font-size:12px;font-family:'Liberation Sans';font-weight:normal;color:#000;transform:scaleX(0.9064);">sa</div><svg class="i" style="left:81px;top:351px;" width="15" height="14" viewBox="0 0 15 14"><path d="M1 14 Q1 8.5 5 8 L7.5 10 L10 8 Q12 8.5 11.5 14 Z" fill="url(#gusr)" stroke="#2a5ab0" stroke-width="0.8"/><path d="M5 8.5 L7.5 11.5 L9.5 8.5 Z" fill="#fff"/><ellipse cx="7.6" cy="5" rx="2.6" ry="3.2" fill="#e2ac7c"/><path d="M4.5 6 Q4 1 7.5 1 Q10.5 1 10.5 3.5 L9 3.2 Q7 3.5 6.2 5.5 L6 8 Z" fill="#20140c"/></svg><div class="t" style="left:102px;top:351.84px;font-size:12px;font-family:'Liberation Sans';font-weight:normal;color:#000;transform:scaleX(1.0976);">SIVILL\Siv</div><svg class="i" style="left:81px;top:369px;" width="15" height="14" viewBox="0 0 15 14"><path d="M1 14 Q1 8.5 5 8 L7.5 10 L10 8 Q12 8.5 11.5 14 Z" fill="url(#gusr)" stroke="#2a5ab0" stroke-width="0.8"/><path d="M5 8.5 L7.5 11.5 L9.5 8.5 Z" fill="#fff"/><ellipse cx="7.6" cy="5" rx="2.6" ry="3.2" fill="#e2ac7c"/><path d="M4.5 6 Q4 1 7.5 1 Q10.5 1 10.5 3.5 L9 3.2 Q7 3.5 6.2 5.5 L6 8 Z" fill="#20140c"/></svg><div class="t" style="left:102px;top:369.84px;font-size:12px;font-family:'Liberation Sans';font-weight:normal;color:#000;transform:scaleX(0.9500);">WU</div><svg class="i" style="left:47px;top:391px;" width="9" height="9" viewBox="0 0 9 9"><rect x="0.5" y="0.5" width="8" height="8" fill="url(#gbox)" stroke="#9a9a9a"/><rect x="2" y="4" width="5" height="1" fill="#3b4a7a"/><rect x="4" y="2" width="1" height="5" fill="#3b4a7a"/></svg><svg class="i" style="left:62px;top:388px;" width="15" height="12" viewBox="0 0 15 12"><path d="M1.5 2.5 L1.5 1 L7 1 L8 2.5" fill="#f4e8b8" stroke="#9a8c68" stroke-width="1"/><rect x="0.5" y="2.5" width="14" height="9" fill="url(#gfold)" stroke="#8c7c58"/><path d="M14.5 3 L14.5 11.5 L0.5 11.5" fill="none" stroke="#2a1c08" stroke-width="1"/><path d="M1.5 3.5 L13.5 3.5" stroke="#fff6c8" stroke-width="1"/></svg><div class="t" style="left:83px;top:387.84px;font-size:12px;font-family:'Liberation Sans';font-weight:normal;color:#000;transform:scaleX(0.9083);">Server Roles</div><svg class="i" style="left:47px;top:409px;" width="9" height="9" viewBox="0 0 9 9"><rect x="0.5" y="0.5" width="8" height="8" fill="url(#gbox)" stroke="#9a9a9a"/><rect x="2" y="4" width="5" height="1" fill="#3b4a7a"/></svg><svg class="i" style="left:62px;top:406px;" width="15" height="12" viewBox="0 0 15 12"><path d="M1.5 2.5 L1.5 1 L7 1 L8 2.5" fill="#f4e8b8" stroke="#9a8c68" stroke-width="1"/><rect x="0.5" y="2.5" width="14" height="9" fill="url(#gfold)" stroke="#8c7c58"/><path d="M14.5 3 L14.5 11.5 L0.5 11.5" fill="none" stroke="#2a1c08" stroke-width="1"/><path d="M1.5 3.5 L13.5 3.5" stroke="#fff6c8" stroke-width="1"/></svg><div class="t" style="left:83px;top:405.84px;font-size:12px;font-family:'Liberation Sans';font-weight:normal;color:#000;transform:scaleX(0.9802);">Credentials</div><div class="r" style="left:100px;top:421px;width:23px;height:17px;background:#e8e8e8"></div><svg class="i" style="left:81px;top:422px;" width="15" height="15" viewBox="0 0 15 15"><rect x="4.5" y="5.5" width="9" height="9" fill="#fff" stroke="#7a7f88"/><path d="M6 14 Q6 11 9 10.5 L10 11.5 L11 10.5 Q13 11 13 14 Z" fill="#3c78c8"/><ellipse cx="9.5" cy="8.5" rx="1.8" ry="2" fill="#e0a878"/><path d="M7.7 8.5 Q7.7 6 9.5 6.2 Q11.3 6.2 11.3 8 Z" fill="#2a1a10"/><path d="M2 4.5 L2 3 Q2 0.8 4 0.8 Q6 0.8 6 3 L6 4.5" fill="none" stroke="#5a6a80" stroke-width="1.2"/><rect x="0.5" y="4.5" width="7" height="6" fill="#6a9ae0" stroke="#3a60b0"/><rect x="3.5" y="6.5" width="1" height="2" fill="#1a2a60"/></svg><div class="t" style="left:102px;top:423.84px;font-size:12px;font-family:'Liberation Sans';font-weight:normal;color:#000;transform:scaleX(0.9500);">WU</div><svg class="i" style="left:47px;top:445px;" width="9" height="9" viewBox="0 0 9 9"><rect x="0.5" y="0.5" width="8" height="8" fill="url(#gbox)" stroke="#9a9a9a"/><rect x="2" y="4" width="5" height="1" fill="#3b4a7a"/><rect x="4" y="2" width="1" height="5" fill="#3b4a7a"/></svg><svg class="i" style="left:62px;top:442px;" width="15" height="12" viewBox="0 0 15 12"><path d="M1.5 2.5 L1.5 1 L7 1 L8 2.5" fill="#f4e8b8" stroke="#9a8c68" stroke-width="1"/><rect x="0.5" y="2.5" width="14" height="9" fill="url(#gfold)" stroke="#8c7c58"/><path d="M14.5 3 L14.5 11.5 L0.5 11.5" fill="none" stroke="#2a1c08" stroke-width="1"/><path d="M1.5 3.5 L13.5 3.5" stroke="#fff6c8" stroke-width="1"/></svg><div class="t" style="left:83px;top:441.84px;font-size:12px;font-family:'Liberation Sans';font-weight:normal;color:#000;transform:scaleX(0.9944);">Cryptographic Providers</div><svg class="i" style="left:47px;top:463px;" width="9" height="9" viewBox="0 0 9 9"><rect x="0.5" y="0.5" width="8" height="8" fill="url(#gbox)" stroke="#9a9a9a"/><rect x="2" y="4" width="5" height="1" fill="#3b4a7a"/><rect x="4" y="2" width="1" height="5" fill="#3b4a7a"/></svg><svg class="i" style="left:62px;top:460px;" width="15" height="12" viewBox="0 0 15 12"><path d="M1.5 2.5 L1.5 1 L7 1 L8 2.5" fill="#f4e8b8" stroke="#9a8c68" stroke-width="1"/><rect x="0.5" y="2.5" width="14" height="9" fill="url(#gfold)" stroke="#8c7c58"/><path d="M14.5 3 L14.5 11.5 L0.5 11.5" fill="none" stroke="#2a1c08" stroke-width="1"/><path d="M1.5 3.5 L13.5 3.5" stroke="#fff6c8" stroke-width="1"/></svg><div class="t" style="left:83px;top:459.84px;font-size:12px;font-family:'Liberation Sans';font-weight:normal;color:#000;transform:scaleX(1.0342);">Audits</div><svg class="i" style="left:47px;top:481px;" width="9" height="9" viewBox="0 0 9 9"><rect x="0.5" y="0.5" width="8" height="8" fill="url(#gbox)" stroke="#9a9a9a"/><rect x="2" y="4" width="5" height="1" fill="#3b4a7a"/><rect x="4" y="2" width="1" height="5" fill="#3b4a7a"/></svg><svg class="i" style="left:62px;top:478px;" width="15" height="12" viewBox="0 0 15 12"><path d="M1.5 2.5 L1.5 1 L7 1 L8 2.5" fill="#f4e8b8" stroke="#9a8c68" stroke-width="1"/><rect x="0.5" y="2.5" width="14" height="9" fill="url(#gfold)" stroke="#8c7c58"/><path d="M14.5 3 L14.5 11.5 L0.5 11.5" fill="none" stroke="#2a1c08" stroke-width="1"/><path d="M1.5 3.5 L13.5 3.5" stroke="#fff6c8" stroke-width="1"/></svg><div class="t" style="left:83px;top:477.84px;font-size:12px;font-family:'Liberation Sans';font-weight:normal;color:#000;transform:scaleX(0.9842);">Server Audit Specifications</div><svg class="i" style="left:28px;top:499px;" width="9" height="9" viewBox="0 0 9 9"><rect x="0.5" y="0.5" width="8" height="8" fill="url(#gbox)" stroke="#9a9a9a"/><rect x="2" y="4" width="5" height="1" fill="#3b4a7a"/><rect x="4" y="2" width="1" height="5" fill="#3b4a7a"/></svg><svg class="i" style="left:43px;top:496px;" width="15" height="12" viewBox="0 0 15 12"><path d="M1.5 2.5 L1.5 1 L7 1 L8 2.5" fill="#f4e8b8" stroke="#9a8c68" stroke-width="1"/><rect x="0.5" y="2.5" width="14" height="9" fill="url(#gfold)" stroke="#8c7c58"/><path d="M14.5 3 L14.5 11.5 L0.5 11.5" fill="none" stroke="#2a1c08" stroke-width="1"/><path d="M1.5 3.5 L13.5 3.5" stroke="#fff6c8" stroke-width="1"/></svg><div class="t" style="left:64px;top:495.84px;font-size:12px;font-family:'Liberation Sans';font-weight:normal;color:#000;transform:scaleX(0.9514);">Server Objects</div><svg class="i" style="left:28px;top:517px;" width="9" height="9" viewBox="0 0 9 9"><rect x="0.5" y="0.5" width="8" height="8" fill="url(#gbox)" stroke="#9a9a9a"/><rect x="2" y="4" width="5" height="1" fill="#3b4a7a"/><rect x="4" y="2" width="1" height="5" fill="#3b4a7a"/></svg><svg class="i" style="left:43px;top:514px;" width="15" height="12" viewBox="0 0 15 12"><path d="M1.5 2.5 L1.5 1 L7 1 L8 2.5" fill="#f4e8b8" stroke="#9a8c68" stroke-width="1"/><rect x="0.5" y="2.5" width="14" height="9" fill="url(#gfold)" stroke="#8c7c58"/><path d="M14.5 3 L14.5 11.5 L0.5 11.5" fill="none" stroke="#2a1c08" stroke-width="1"/><path d="M1.5 3.5 L13.5 3.5" stroke="#fff6c8" stroke-width="1"/></svg><div class="t" style="left:64px;top:513.84px;font-size:12px;font-family:'Liberation Sans';font-weight:normal;color:#000;transform:scaleX(0.9937);">Replication</div><svg class="i" style="left:28px;top:535px;" width="9" height="9" viewBox="0 0 9 9"><rect x="0.5" y="0.5" width="8" height="8" fill="url(#gbox)" stroke="#9a9a9a"/><rect x="2" y="4" width="5" height="1" fill="#3b4a7a"/><rect x="4" y="2" width="1" height="5" fill="#3b4a7a"/></svg><svg class="i" style="left:43px;top:532px;" width="15" height="12" viewBox="0 0 15 12"><path d="M1.5 2.5 L1.5 1 L7 1 L8 2.5" fill="#f4e8b8" stroke="#9a8c68" stroke-width="1"/><rect x="0.5" y="2.5" width="14" height="9" fill="url(#gfold)" stroke="#8c7c58"/><path d="M14.5 3 L14.5 11.5 L0.5 11.5" fill="none" stroke="#2a1c08" stroke-width="1"/><path d="M1.5 3.5 L13.5 3.5" stroke="#fff6c8" stroke-width="1"/></svg><div class="t" style="left:64px;top:531.84px;font-size:12px;font-family:'Liberation Sans';font-weight:normal;color:#000;transform:scaleX(1.0279);">Management</div><svg class="i" style="left:43px;top:548px;" width="15" height="15" viewBox="0 0 15 15"><rect x="0.5" y="0.5" width="8" height="14" fill="#eef2fa" stroke="#7a7f88"/><rect x="2" y="3" width="5" height="1" fill="#aab"/><rect x="2" y="6" width="5" height="1" fill="#aab"/><circle cx="9" cy="4" r="2.6" fill="#fff" stroke="#444" stroke-width="0.8"/><path d="M9 4 L9 2 M9 4 L10.5 4" stroke="#000" stroke-width="0.8"/><circle cx="10" cy="10.5" r="4" fill="#fff" stroke="#a04040" stroke-width="0.9"/><path d="M9.2 8 L10.8 8 L10.8 10 L12 10 L10 12.8 L8 10 L9.2 10 Z" fill="#b02020"/></svg><div class="t" style="left:64px;top:549.84px;font-size:12px;font-family:'Liberation Sans';font-weight:normal;color:#000;transform:scaleX(0.9607);">SQL Server Agent (Agent XPs disabled)</div><div class="r" style="left:393px;top:100px;width:473px;height:567px;background:#f2f2f2"></div><div class="r" style="left:393px;top:100px;width:1px;height:567px;background:#a0a0a0"></div><div class="r" style="left:394px;top:100px;width:472px;height:1px;background:#a0a0a0"></div><svg class="i" style="left:394px;top:101px;" width="472" height="19" viewBox="0 0 472 19"><path d="M1.5 18.5 L2.5 18.5 L18.5 2.5 L229.5 2.5 L231.5 4.5 L231.5 18.5" fill="#fff" stroke="#8a8a8a"/><path d="M1.5 18.5 L472 18.5" stroke="#8a8a8a"/></svg><div class="t" style="left:411px;top:104.84px;font-size:12px;font-family:'Liberation Sans';font-weight:bold;color:#000;transform:scaleX(0.9647);">SQLQuery1.sql - BI... (SIVILL\Siv (52))*</div><div class="r" style="left:395px;top:119px;width:471px;height:437px;background:#fff;border-left:1px solid #8a8a8a;border-bottom:1px solid #8a8a8a"></div><div class="r" style="left:396px;top:119px;width:17px;height:419px;background:#f0f0f0"></div><div class="r" style="left:625px;top:119px;width:241px;height:1px;background:#8a8a8a"></div><div class="t" style="left:446px;top:123.65px;font-size:12.2px;font-family:'Liberation Mono';font-weight:normal;color:#2a7f90;">1</div><div class="t" style="left:446px;top:140.65px;font-size:12.2px;font-family:'Liberation Mono';font-weight:normal;color:#2a7f90;">2</div><div class="t" style="left:446px;top:157.65px;font-size:12.2px;font-family:'Liberation Mono';font-weight:normal;color:#2a7f90;">3</div><div class="t" style="left:446px;top:174.65px;font-size:12.2px;font-family:'Liberation Mono';font-weight:normal;color:#2a7f90;">4</div><div class="t" style="left:446px;top:191.65px;font-size:12.2px;font-family:'Liberation Mono';font-weight:normal;color:#2a7f90;">5</div><div class="t" style="left:446px;top:208.65px;font-size:12.2px;font-family:'Liberation Mono';font-weight:normal;color:#2a7f90;">6</div><div class="t" style="left:446px;top:225.65px;font-size:12.2px;font-family:'Liberation Mono';font-weight:normal;color:#2a7f90;">7</div><div class="t" style="left:446px;top:242.65px;font-size:12.2px;font-family:'Liberation Mono';font-weight:normal;color:#2a7f90;">8</div><div class="r" style="left:454px;top:120px;width:1px;height:418px;background:repeating-linear-gradient(#2a6a78 0 1px,transparent 1px 2px)"></div><div class="r" style="left:455px;top:120px;width:3px;height:136px;background:#f8f000"></div><svg class="i" style="left:455px;top:175px;" width="12" height="58" viewBox="0 0 12 58"><rect x="1.5" y="1.5" width="8" height="8" fill="#fff" stroke="#8a8a8a"/><path d="M3.5 5.5 L7.5 5.5" stroke="#555"/><path d="M5.5 12 L5.5 55.5 L11 55.5 M5.5 38.5 L11 38.5" fill="none" stroke="#8a8a8a"/></svg><div class="t code" style="left:469px;top:122.80px"><span style="color:#0000ff">USE</span> model</div><div class="t code" style="left:469px;top:139.80px"><span style="color:#0000ff">GO</span></div><div class="t code" style="left:469px;top:156.80px"></div><div class="t code" style="left:469px;top:173.80px"><span style="color:#0000ff">SELECT</span> s.name</div><div class="t code" style="left:469px;top:190.80px"> <span style="color:#0000ff">FROM</span> <span style="color:#008000">sys.schemas</span> s</div><div class="t code" style="left:469px;top:207.80px"> <span style="color:#0000ff">WHERE</span> s.principal_id <span style="color:#808080">=</span> <span style="color:#ff00ff">USER_ID</span><span style="color:#808080">(</span><span style="color:#ff0000">'WU'</span><span style="color:#808080">)</span></div><div class="r" style="left:396px;top:539px;width:470px;height:15px;background:#cdcdcd"></div><div class="r" style="left:396px;top:539px;width:17px;height:15px;background:#ebebeb"></div><svg class="i" style="left:400px;top:542px;" width="9" height="9" viewBox="0 0 9 9"><path d="M6.5 1 L2.5 4.5 L6.5 8" fill="none" stroke="#404040" stroke-width="2.3"/></svg><svg class="i" style="left:396px;top:559px;" width="470" height="24" viewBox="0 0 470 24"><path d="M1.5 23 L1.5 3.5 L68.5 3.5 L68.5 22.5" fill="#e8e8e8" stroke="#9a9a9a"/><path d="M68.5 22.5 L68.5 1.5 L153.5 1.5 L153.5 22.5 L470 22.5" fill="#fff" stroke="#9a9a9a"/></svg><div class="r" style="left:395px;top:582px;width:471px;height:85px;background:#fff;border-left:1px solid #9a9a9a"></div><div class="r" style="left:465px;top:581px;width:84px;height:2px;background:#fff"></div><svg class="i" style="left:404px;top:566px;" width="15" height="13" viewBox="0 0 15 13"><rect x="0.5" y="0.5" width="13" height="12" fill="#fff" stroke="#3a5a9a"/><rect x="1" y="1" width="12" height="2.5" fill="#5a80c8"/><path d="M1 6.5 L13 6.5 M1 9.5 L13 9.5 M5 3.5 L5 12.5 M9 3.5 L9 12.5" stroke="#8aa0c8" stroke-width="0.8"/></svg><div class="t" style="left:425px;top:566.84px;font-size:12px;font-family:'Liberation Sans';font-weight:normal;color:#000;transform:scaleX(0.8497);">Results</div><svg class="i" style="left:472px;top:561px;" width="16" height="17" viewBox="0 0 16 17"><rect x="1.5" y="0.5" width="7" height="15" fill="url(#gdoc)" stroke="#7a8498"/><rect x="2" y="1" width="6" height="3" fill="#b8c4d8"/><path d="M2 6.5 L8 6.5 M2 9.5 L8 9.5" stroke="#aab4c8"/><path d="M7.5 7.5 L12.5 7.5 L14.5 9.5 L14.5 16.5 L7.5 16.5 Z" fill="#fff" stroke="#6a7488"/><path d="M9.5 10.5 L10.5 10.5 M9.5 12.5 L10.5 12.5 M9.5 14.5 L10.5 14.5" stroke="#d04020" stroke-width="1"/><path d="M11.5 10.5 L13 10.5 M11.5 12.5 L13 12.5 M11.5 14.5 L13 14.5" stroke="#8a94a8" stroke-width="1"/></svg><div class="t" style="left:494px;top:565.84px;font-size:12px;font-family:'Liberation Sans';font-weight:normal;color:#000;transform:scaleX(0.8592);">Messages</div><div class="t" style="left:412px;top:600.72px;font-size:10.8px;font-family:'Liberation Mono';font-weight:normal;color:#3a3a3a;transform:scaleX(1.0722);">(0 row(s) affected)</div><div class="r" style="left:411px;top:613px;width:1px;height:15px;background:#000"></div></body></html>
